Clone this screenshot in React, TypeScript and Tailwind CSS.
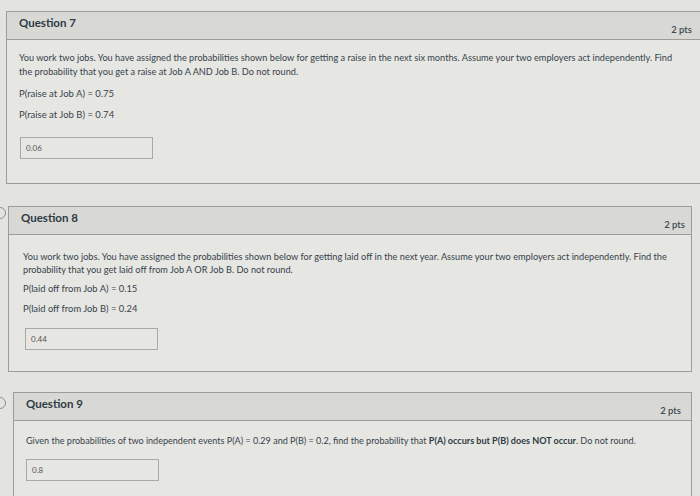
import React from "react";

function Flag({ top }: { top: number }) {
  return (
    <svg className="absolute left-0" style={{ top }} width="8" height="14" viewBox="0 0 8 14">
      <circle cx="0" cy="7" r="5.5" fill="none" stroke="#8f8f8c" strokeWidth="1" />
    </svg>
  );
}

function Header({ n, pr }: { n: number; pr: string }) {
  return (
    <div className={`h-[28px] bg-[#d8d8d4] border-b border-[#9c9c99] flex justify-between items-stretch pl-[12px] ${pr}`}>
      <div className="text-[11.5px] font-bold text-[#2d3b45] pt-[4px] leading-[14px]">Question {n}</div>
      <div className="text-[9.5px] font-semibold text-[#3d4a53] self-end pb-[2px]">2 pts</div>
    </div>
  );
}

function Input({ v }: { v: string }) {
  return (
    <div className="w-[133px] h-[22px] border border-[#a9a9a6] bg-[#e6e6e2] text-[8px] text-[#555] pl-[5px] flex items-center">
      {v}
    </div>
  );
}

export default function App() {
  return (
    <div
      className="relative w-[700px] h-[496px] overflow-hidden bg-[#e3e3df] text-[#2d3b45]"
      style={{ fontFamily: "Lato, 'Open Sans', sans-serif" }}
    >
      <Flag top={206} />
      <Flag top={396} />
      <div className="flex flex-col">
        {/* Question 7 */}
        <div className="ml-[6px] mt-[11px] w-[720px] h-[173px] border border-[#9c9c99] bg-[#e6e6e2]">
          <Header n={7} pr="pr-[33px]" />
          <div className="pl-[12px] pt-[11px] text-[9.2px] leading-[14px] text-[#36434c]">
            <p className="w-[660px]">
              You work two jobs. You have assigned the probabilities shown below for getting a raise in the next six months. Assume your two employers act independently. Find the probability that you get a raise at Job A AND Job B. Do not round.
            </p>
            <p className="mt-[8px] text-[9.5px]">P(raise at Job A) = 0.75</p>
            <p className="mt-[7px] text-[9.5px]">P(raise at Job B) = 0.74</p>
            <div className="mt-[15px] ml-[1px]">
              <Input v="0.06" />
            </div>
          </div>
        </div>

        {/* Question 8 */}
        <div className="ml-[8px] mt-[22px] w-[684px] h-[166px] border border-[#9c9c99] bg-[#e6e6e2]">
          <Header n={8} pr="pr-[6px]" />
          <div className="pl-[14px] pt-[15px] text-[9.2px] leading-[13px] text-[#36434c]">
            <p className="w-[655px]">
              You work two jobs. You have assigned the probabilities shown below for getting laid off in the next year. Assume your two employers act independently. Find the probability that you get laid off from Job A OR Job B. Do not round.
            </p>
            <p className="mt-[6px] text-[9.4px]">P(laid off from Job A) = 0.15</p>
            <p className="mt-[7px] text-[9.4px]">P(laid off from Job B) = 0.24</p>
            <div className="mt-[13px] ml-[2px]">
              <Input v="0.44" />
            </div>
          </div>
        </div>

        {/* Question 9 */}
        <div className="ml-[13px] mt-[20px] w-[679px] h-[120px] border border-[#9c9c99] bg-[#e6e6e2]">
          <Header n={9} pr="pr-[10px]" />
          <div className="pl-[12px] pt-[13px] text-[9.05px] leading-[13px] text-[#36434c]">
            <p>
              Given the probabilities of two independent events P(A) = 0.29 and P(B) = 0.2, find the probability that{" "}
              <b className="text-[#2d3b45]">P(A) occurs but P(B) does NOT occur</b>. Do not round.
            </p>
            <div className="mt-[12px]">
              <Input v="0.8" />
            </div>
          </div>
        </div>
      </div>
    </div>
  );
}
